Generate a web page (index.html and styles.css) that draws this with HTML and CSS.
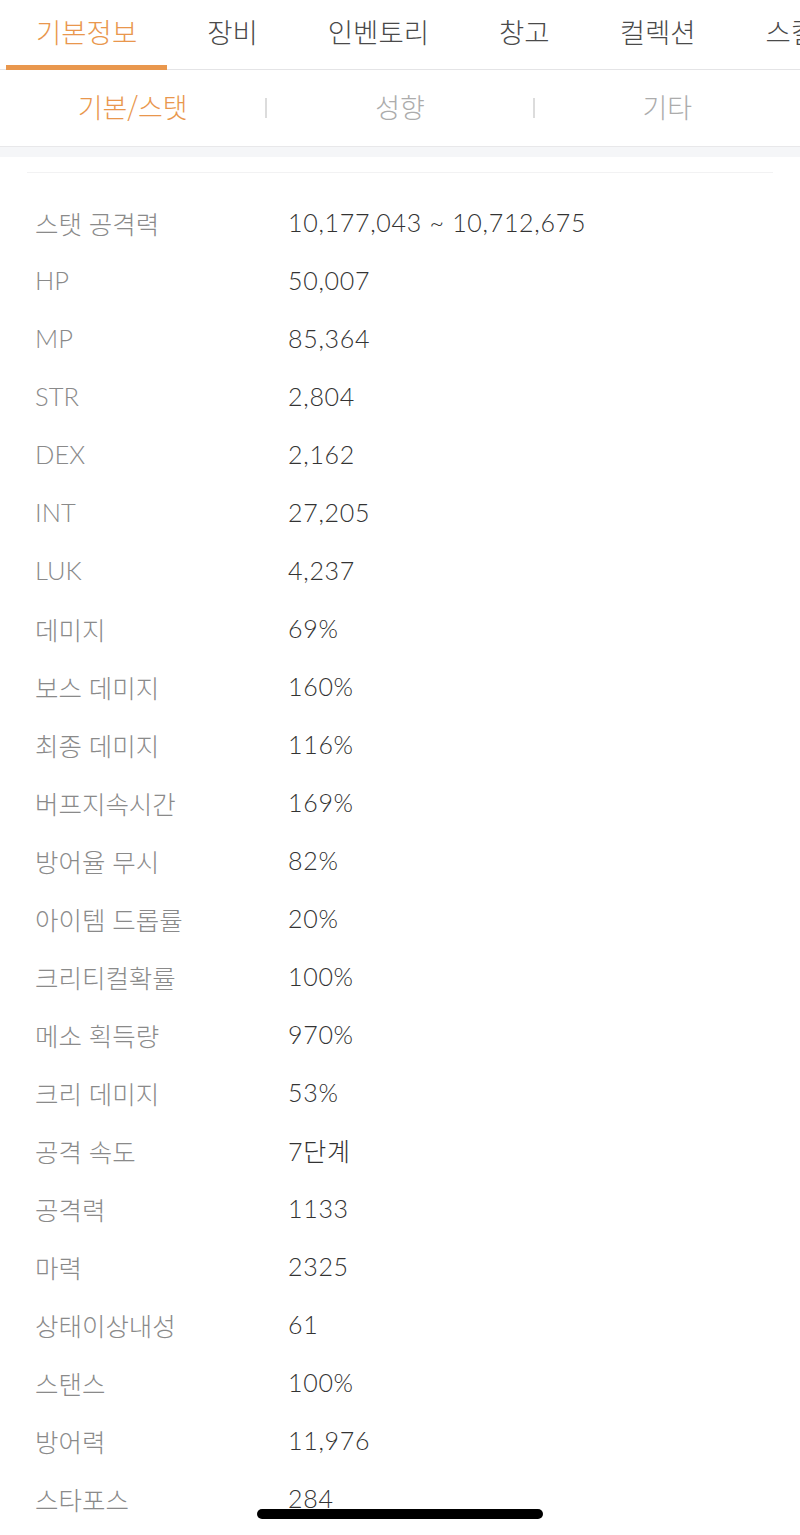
FILE: index.html
```html
<!DOCTYPE html>
<html lang="ko">
<head>
<meta charset="utf-8">
<title>기본정보</title>
<link rel="stylesheet" href="styles.css">
</head>
<body>
<div class="page">
  <nav class="topnav">
    <div class="tab active">기본정보</div>
    <div class="tab">장비</div>
    <div class="tab">인벤토리</div>
    <div class="tab">창고</div>
    <div class="tab">컬렉션</div>
    <div class="tab">스킬</div>
  </nav>
  <div class="subnav">
    <div class="sub active">기본/스탯</div>
    <span class="sep"></span>
    <div class="sub">성향</div>
    <span class="sep"></span>
    <div class="sub">기타</div>
  </div>
  <div class="band"></div>
  <div class="content">
    <div class="rule"></div>
    <ul class="stats">
      <li><span class="k">스탯 공격력</span><span class="v">10,177,043 ~ 10,712,675</span></li>
      <li><span class="k">HP</span><span class="v">50,007</span></li>
      <li><span class="k">MP</span><span class="v">85,364</span></li>
      <li><span class="k">STR</span><span class="v">2,804</span></li>
      <li><span class="k">DEX</span><span class="v">2,162</span></li>
      <li><span class="k">INT</span><span class="v">27,205</span></li>
      <li><span class="k">LUK</span><span class="v">4,237</span></li>
      <li><span class="k">데미지</span><span class="v">69%</span></li>
      <li><span class="k">보스 데미지</span><span class="v">160%</span></li>
      <li><span class="k">최종 데미지</span><span class="v">116%</span></li>
      <li><span class="k">버프지속시간</span><span class="v">169%</span></li>
      <li><span class="k">방어율 무시</span><span class="v">82%</span></li>
      <li><span class="k">아이템 드롭률</span><span class="v">20%</span></li>
      <li><span class="k">크리티컬확률</span><span class="v">100%</span></li>
      <li><span class="k">메소 획득량</span><span class="v">970%</span></li>
      <li><span class="k">크리 데미지</span><span class="v">53%</span></li>
      <li><span class="k">공격 속도</span><span class="v">7단계</span></li>
      <li><span class="k">공격력</span><span class="v">1133</span></li>
      <li><span class="k">마력</span><span class="v">2325</span></li>
      <li><span class="k">상태이상내성</span><span class="v">61</span></li>
      <li><span class="k">스탠스</span><span class="v">100%</span></li>
      <li><span class="k">방어력</span><span class="v">11,976</span></li>
      <li><span class="k">스타포스</span><span class="v">284</span></li>
    </ul>
  </div>
  <div class="home-indicator"></div>
</div>
</body>
</html>
```

FILE: styles.css
```css
* { box-sizing: border-box; margin: 0; padding: 0; }
html, body { width: 800px; height: 1535px; overflow: hidden; background: #fff; }
body {
  font-family: Lato, "Noto Sans CJK KR", sans-serif;
  color: #333;
}
.page { position: relative; width: 800px; height: 1535px; overflow: hidden; }

.topnav {
  display: flex;
  gap: 10px;
  padding-left: 6px;
  height: 70px;
  box-shadow: inset 0 -1px 0 #e4e4e6;
  white-space: nowrap;
  overflow: hidden;
}
.tab {
  flex: none;
  height: 70px;
  padding: 13px 30px 0;
  font-family: "Noto Sans CJK KR", sans-serif;
  font-size: 27.5px;
  line-height: 36px;
  font-weight: 300;
  color: #4a4a4a;
}
.tab.active {
  color: #e9974d;
  border-bottom: 5px solid #e9974d;
}

.subnav {
  display: flex;
  align-items: center;
  height: 77px;
  border-bottom: 1px solid #e8e8ea;
}
.sub {
  flex: 1;
  text-align: center;
  font-family: "Noto Sans CJK KR", sans-serif;
  font-size: 27px;
  line-height: 36px;
  font-weight: 300;
  color: #acacac;
  padding-bottom: 2px;
}
.sub.active { color: #e9974d; }
.sep {
  flex: none;
  width: 2px;
  height: 20px;
  background: #dcdcdc;
}

.band { height: 10px; background: #f5f6f8; }

.content { padding: 15px 27px 0; }
.rule { border-top: 1px solid #f2f2f3; }
.stats { list-style: none; padding-top: 20px; }
.stats li {
  display: flex;
  align-items: center;
  height: 58px;
}
.k {
  width: 261px;
  padding-left: 8px;
  font-family: Lato, "Noto Sans CJK KR", sans-serif;
  font-size: 25.5px;
  font-weight: 300;
  color: #8a8a8a;
}
.v {
  font-size: 25px;
  font-weight: 300;
  letter-spacing: 0.7px;
  color: #333;
}

.home-indicator {
  position: absolute;
  left: 257px;
  bottom: 16px;
  width: 286px;
  height: 10px;
  border-radius: 5px;
  background: #000;
}
```
